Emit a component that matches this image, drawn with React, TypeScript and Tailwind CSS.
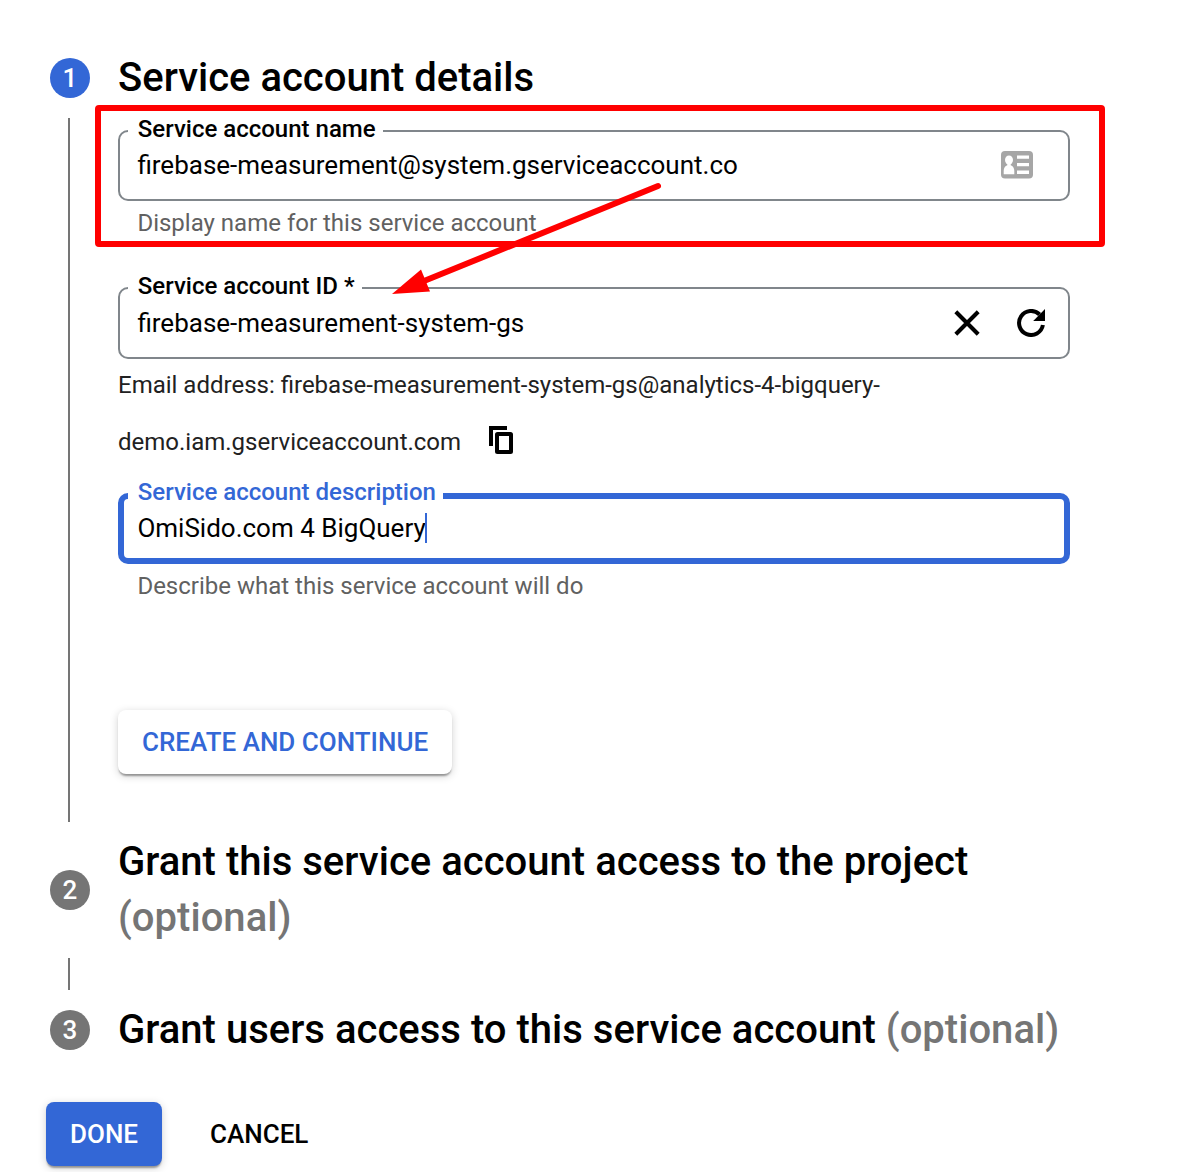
import React from 'react';

interface StepBadgeProps {
  value: number;
  active?: boolean;
}

const StepBadge: React.FC<StepBadgeProps> = ({ value, active }) => (
  <div
    className={`flex size-10 shrink-0 items-center justify-center rounded-full text-[26px] font-medium text-white ${
      active ? 'bg-[#3367d6]' : 'bg-[#757575]'
    }`}
  >
    {value}
  </div>
);

interface OutlinedFieldProps {
  label: string;
  value: string;
  focused?: boolean;
  className: string;
  children?: React.ReactNode;
}

const OutlinedField: React.FC<OutlinedFieldProps> = ({ label, value, focused, className, children }) => (
  <fieldset
    className={`min-w-0 rounded-[10px] ${
      focused ? 'border-6 border-[#3367d6] pl-[13.4px]' : 'border-2 border-[#80868b] pl-[17.4px]'
    } ${className}`}
  >
    <legend
      className={`-ml-[9.4px] h-[2px] pr-[7px] pl-[9.8px] text-2xl leading-[0px] font-medium whitespace-nowrap ${
        focused ? 'text-[#3367d6]' : 'text-black'
      }`}
    >
      <span className={`block ${focused ? '-mt-[3px]' : '-mt-px'}`}>{label}</span>
    </legend>
    <div className="flex h-full items-center">
      <span className="text-[26px] leading-8 text-black">{value}</span>
      {focused && <span className="-ml-px h-[30px] w-[2px] bg-[#3367d6]" />}
      {children}
    </div>
  </fieldset>
);

const ContactCardIcon = () => (
  <svg className="mr-[35px] ml-auto h-7 w-8" viewBox="0 0 32 28">
    <rect width="32" height="27.5" rx="4" fill="#a6a6a6" />
    <g fill="#fff">
      <ellipse cx="8" cy="9" rx="4" ry="4.6" />
      <path d="M6.3 12h3.4v2.2c2.2.8 3.6 2.8 3.6 5.6v3.4H2.7v-3.4c0-2.8 1.4-4.8 3.6-5.6z" />
      <path d="M16 4.5h12v3.3H16zM16 12h12v3.3H16zM16 19.6h12v3.5H16z" />
    </g>
  </svg>
);

const ClearIcon = () => (
  <svg className="ml-auto size-[26px]" viewBox="0 0 26 26" stroke="#000" strokeWidth="4.1">
    <path d="M1.8 1.8l22.4 22.4M24.2 1.8L1.8 24.2" />
  </svg>
);

const RefreshIcon = () => (
  <svg className="mr-[23px] ml-[37px] size-7" viewBox="0 0 28 28">
    <path d="M25.9 16A12 12 0 1 1 22.6 5.5" fill="none" stroke="#000" strokeWidth="4" />
    <path d="M28 0v12H16.2z" />
  </svg>
);

const CopyIcon = () => (
  <svg className="mb-[4px] ml-7 h-7 w-6" viewBox="0 0 24 28" fill="none" stroke="#000" strokeWidth="4">
    <path d="M18 2H2v18" />
    <rect x="8" y="8" width="14" height="18" rx="0.5" />
  </svg>
);

const Annotations = () => (
  <>
    <div className="absolute top-[105px] left-[95px] h-[142px] w-[1010px] rounded-[4px] border-6 border-[#ff0000]" />
    <svg className="absolute top-[170px] left-[380px] h-[140px] w-[300px]" viewBox="380 170 300 140">
      <path d="M658 186L424 281" stroke="#ff0000" strokeWidth="6" strokeLinecap="round" />
      <path d="M392 294L421 269.5L430 291.5z" fill="#ff0000" />
    </svg>
  </>
);

const App: React.FC = () => {
  return (
    <div className="relative h-[1172px] w-[1184px] overflow-hidden bg-white pt-[50px] pl-[50px] font-['Roboto',sans-serif] text-black">
      <section className="flex h-[784px]">
        <div className="flex w-10 flex-col items-center pt-2">
          <StepBadge value={1} active />
          <div className="mt-5 mr-[2px] h-[704px] w-[2px] bg-[#757575]" />
        </div>
        <div className="ml-7 w-[952px]">
          <h2 className="text-[40px] leading-14 font-medium">Service account details</h2>

          <OutlinedField
            label="Service account name"
            value="firebase-measurement@system.gserviceaccount.co"
            className="mt-6 h-[71px] pb-px"
          >
            <ContactCardIcon />
          </OutlinedField>
          <p className="mt-[6px] pl-[19.4px] text-2xl leading-8 text-[#616161]">Display name for this service account</p>

          <OutlinedField label="Service account ID *" value="firebase-measurement-system-gs" className="mt-12 h-[72px]">
            <ClearIcon />
            <RefreshIcon />
          </OutlinedField>
          <p className="text-2xl leading-[53px] text-[#212121]">
            Email address: firebase-measurement-system-gs@analytics-4-bigquery-
          </p>
          <div className="flex h-[59px] items-center text-2xl text-[#212121]">
            <span>demo.iam.gserviceaccount.com</span>
            <CopyIcon />
          </div>

          <OutlinedField
            label="Service account description"
            value="OmiSido.com 4 BigQuery"
            focused
            className="mt-[22px] h-[71px] pb-px"
          />
          <p className="mt-[6px] pl-[19.4px] text-2xl leading-8 text-[#616161]">Describe what this service account will do</p>

          <button className="mt-[108px] block h-16 rounded-lg bg-white px-6 text-[26px] font-medium text-[#3367d6] shadow-[0_3px_2px_-1px_rgba(0,0,0,0.35),0_2px_8px_rgba(0,0,0,0.18)]">
            CREATE AND CONTINUE
          </button>
        </div>
      </section>

      <section className="flex items-center">
        <StepBadge value={2} />
        <h2 className="ml-7 w-[952px] text-[40px] leading-14 font-medium tracking-[0.02px]">
          Grant this service account access to the project
          <br />
          <span className="text-[#757575]">(optional)</span>
        </h2>
      </section>
      <div className="my-3 ml-[18px] h-8 w-[2px] bg-[#757575]" />
      <section className="flex items-center">
        <StepBadge value={3} />
        <h2 className="ml-7 text-[40px] leading-14 font-medium tracking-[0.02px]">
          Grant users access to this service account <span className="text-[#757575]">(optional)</span>
        </h2>
      </section>

      <div className="mt-11 -ml-1 flex text-[26px] font-medium">
        <button className="h-16 rounded-lg bg-[#3367d6] px-6 text-white shadow-[0_3px_2px_-1px_rgba(0,0,0,0.35),0_2px_8px_rgba(0,0,0,0.18)]">
          DONE
        </button>
        <button className="ml-6 h-16 px-6">CANCEL</button>
      </div>

      <Annotations />
    </div>
  );
};

export default App;
